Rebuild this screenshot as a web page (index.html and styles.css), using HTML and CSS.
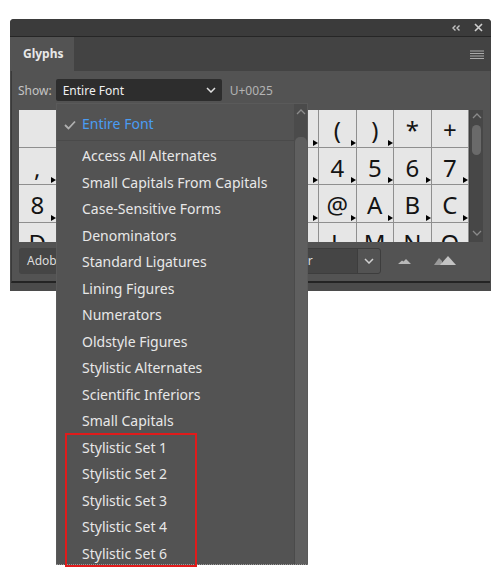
FILE: index.html
```html
<!DOCTYPE html>
<html>
<head>
	<title>Glyphs</title>
	<link rel="stylesheet" href="styles.css">
</head>
<body>
	<div class="panel">
		<div class="titlebar">
			<svg class="collapse" width="8" height="6" viewBox="0 0 8 6"><path d="M3.5 0.5 L1 3 L3.5 5.5 M7.5 0.5 L5 3 L7.5 5.5" fill="none" stroke="#c4c4c4" stroke-width="1.4"/></svg>
			<svg class="close" width="9" height="9" viewBox="0 0 9 9"><path d="M1 1 L8 8 M8 1 L1 8" stroke="#cfcfcf" stroke-width="1.6"/></svg>
		</div>
		<div class="tabs">
			<div class="tab">Glyphs</div>
			<svg class="tab-menu" width="14" height="9" viewBox="0 0 14 9"><path d="M0 1 H14 M0 3.5 H14 M0 6 H14 M0 8.5 H14" stroke="#a9a9a9" stroke-width="1.2"/></svg>
		</div>
		<div class="content">
			<div class="show-row">
				<span class="show-label">Show:</span>
				<div class="select">
					<span>Entire Font</span>
					<svg width="10" height="6" viewBox="0 0 10 6"><path d="M1 1 L5 5 L9 1" fill="none" stroke="#e0e0e0" stroke-width="1.5"/></svg>
				</div>
				<span class="code">U+0025</span>
			</div>

			<div class="grid-wrap">
				<div class="grid">
					<div class="cell"></div>
					<div class="cell alt">!</div>
					<div class="cell alt">"</div>
					<div class="cell alt">#</div>
					<div class="cell alt">$</div>
					<div class="cell alt">%</div>
					<div class="cell alt">&amp;</div>
					<div class="cell alt">'</div>
					<div class="cell alt">(</div>
					<div class="cell alt">)</div>
					<div class="cell">*</div>
					<div class="cell">+</div>

					<div class="cell alt">,</div>
					<div class="cell alt">-</div>
					<div class="cell alt">.</div>
					<div class="cell alt">/</div>
					<div class="cell alt">0</div>
					<div class="cell alt">1</div>
					<div class="cell alt">2</div>
					<div class="cell alt">3</div>
					<div class="cell alt">4</div>
					<div class="cell alt">5</div>
					<div class="cell alt">6</div>
					<div class="cell alt">7</div>

					<div class="cell alt">8</div>
					<div class="cell alt">9</div>
					<div class="cell alt">:</div>
					<div class="cell alt">;</div>
					<div class="cell alt">&lt;</div>
					<div class="cell alt">=</div>
					<div class="cell alt">&gt;</div>
					<div class="cell alt">?</div>
					<div class="cell alt">@</div>
					<div class="cell alt">A</div>
					<div class="cell alt">B</div>
					<div class="cell alt">C</div>

					<div class="cell alt">D</div>
					<div class="cell alt">E</div>
					<div class="cell alt">F</div>
					<div class="cell alt">G</div>
					<div class="cell alt">H</div>
					<div class="cell alt">I</div>
					<div class="cell alt">J</div>
					<div class="cell alt">K</div>
					<div class="cell alt">L</div>
					<div class="cell alt">M</div>
					<div class="cell alt">N</div>
					<div class="cell alt">O</div>
				</div>
				<div class="grid-scroll">
					<svg width="10" height="6" viewBox="0 0 10 6"><path d="M1 5 L5 1 L9 5" fill="none" stroke="#8a8a8a" stroke-width="1.3"/></svg>
					<div class="grid-thumb"></div>
					<svg class="down" width="10" height="6" viewBox="0 0 10 6"><path d="M1 1 L5 5 L9 1" fill="none" stroke="#8a8a8a" stroke-width="1.3"/></svg>
				</div>
			</div>

			<div class="font-row">
				<div class="font-family">Adobe Clean</div>
				<div class="font-style">
					<span class="style-name">Regular</span>
					<span class="style-arrow">
						<svg width="10" height="6" viewBox="0 0 10 6"><path d="M1 1 L5 5 L9 1" fill="none" stroke="#d0d0d0" stroke-width="1.5"/></svg>
					</span>
				</div>
				<svg class="size-small" width="13" height="5" viewBox="0 0 13 5"><polygon points="0,5 4,1.5 5.5,2.5 8,0 13,5" fill="#b9b9b9"/></svg>
				<svg class="size-large" width="22" height="10" viewBox="0 0 22 10"><polygon points="0,10 5,3 8,6 8,10" fill="#9a9a9a"/><polygon points="6,10 14,1 22,10" fill="#c4c4c4"/></svg>
			</div>
		</div>
	</div>

	<div class="dropdown">
		<div class="menu-list">
			<div class="item selected">
				<svg class="check" width="12" height="10" viewBox="0 0 12 10"><path d="M1 5 L4.5 8.5 L11 1.5" fill="none" stroke="#b0b0b0" stroke-width="1.8"/></svg>
				Entire Font
			</div>
			<div class="separator"></div>
			<div class="item">Access All Alternates</div>
			<div class="item">Small Capitals From Capitals</div>
			<div class="item">Case-Sensitive Forms</div>
			<div class="item">Denominators</div>
			<div class="item">Standard Ligatures</div>
			<div class="item">Lining Figures</div>
			<div class="item">Numerators</div>
			<div class="item">Oldstyle Figures</div>
			<div class="item">Stylistic Alternates</div>
			<div class="item">Scientific Inferiors</div>
			<div class="item">Small Capitals</div>
			<div class="item">Stylistic Set 1</div>
			<div class="item">Stylistic Set 2</div>
			<div class="item">Stylistic Set 3</div>
			<div class="item">Stylistic Set 4</div>
			<div class="item">Stylistic Set 6</div>
		</div>
		<div class="menu-scroll">
			<svg width="10" height="6" viewBox="0 0 10 6"><path d="M1 5 L5 1 L9 5" fill="none" stroke="#8c8c8c" stroke-width="1.3"/></svg>
			<div class="menu-thumb"></div>
		</div>
	</div>

	<div class="highlight"></div>
</body>
</html>
```

FILE: styles.css
```css
body {
	position: relative;
	box-sizing: border-box;
	min-height: 580px;
	margin: 0;
	padding: 19px 9px 0 10px;
	background-color: #fff;
	font-family: "Noto Sans", sans-serif;
	font-size: 12px;
}

.panel {
	width: 481px;
	background-color: #4b4b4b;
	border-radius: 4px 4px 0 0;
	overflow: hidden;
}

.titlebar {
	height: 17px;
	display: flex;
	align-items: center;
	justify-content: flex-end;
	gap: 14px;
	padding-right: 8px;
	background-color: #3b3b3b;
	border-bottom: 1px solid #262626;
}

.tabs {
	height: 34px;
	display: flex;
	align-items: center;
	justify-content: space-between;
	padding-right: 7px;
	background-color: #434343;
}

.tab {
	height: 34px;
	line-height: 34px;
	padding: 0 10px 0 13px;
	background-color: #535353;
	color: #e8e8e8;
	font-weight: bold;
}

.content {
	margin: 0 1px 8px 1px;
	padding: 8px 7px 7px 7px;
	background-color: #535353;
	border-left: 1px solid #3a3a3a;
	border-bottom: 2px solid #242424;
}

.show-row {
	height: 22px;
	display: flex;
	align-items: center;
	margin-left: -1px;
}

.show-label {
	color: #c4c4c4;
	margin-right: 4px;
}

.select {
	width: 166px;
	height: 22px;
	box-sizing: border-box;
	display: flex;
	align-items: center;
	justify-content: space-between;
	padding: 0 6px 0 7px;
	background-color: #2d2d2d;
	border-radius: 2px;
	color: #f0f0f0;
}

.code {
	margin-left: 8px;
	color: #b4b4b4;
}

.grid-wrap {
	display: flex;
	height: 132px;
	margin-top: 9px;
	overflow: hidden;
}

.grid {
	width: 450px;
	display: grid;
	grid-template-columns: repeat(12, 37.5px);
	grid-auto-rows: 37.7px;
	align-content: start;
}

.cell {
	position: relative;
	box-sizing: border-box;
	border-right: 1px solid #8f8f8f;
	border-bottom: 1px solid #8f8f8f;
	background-color: #e6e6e6;
	color: #141414;
	font-size: 24px;
	line-height: 36px;
	padding-top: 2px;
	text-align: center;
}

.cell.alt::after {
	content: "";
	position: absolute;
	right: 0;
	bottom: 1px;
	border-left: 5px solid #000;
	border-top: 3px solid transparent;
	border-bottom: 3px solid transparent;
}

.grid-scroll {
	width: 14px;
	display: flex;
	flex-direction: column;
	align-items: center;
	background-color: #474747;
	border-left: 1px solid #3f3f3f;
	padding-top: 3px;
}

.grid-thumb {
	width: 9px;
	height: 30px;
	margin-top: 6px;
	background-color: #6a6a6a;
	border-radius: 5px;
}

.grid-scroll .down {
	margin-top: auto;
	margin-bottom: 6px;
}

.font-row {
	height: 26px;
	display: flex;
	align-items: center;
	margin-top: 6px;
}

.font-family {
	width: 236px;
	height: 26px;
	line-height: 26px;
	box-sizing: border-box;
	padding-left: 8px;
	background-color: #454545;
	border-radius: 3px;
	color: #dcdcdc;
}

.font-style {
	display: flex;
	height: 26px;
	margin-left: 5px;
	box-sizing: border-box;
	border: 1px solid #3d3d3d;
	border-radius: 3px;
	overflow: hidden;
}

.style-name {
	width: 88px;
	padding-left: 8px;
	line-height: 24px;
	background-color: #454545;
	color: #dcdcdc;
	border-right: 1px solid #3d3d3d;
}

.style-arrow {
	width: 22px;
	display: flex;
	align-items: center;
	justify-content: center;
}

.size-small {
	margin-left: 17px;
}

.size-large {
	margin-left: 23px;
	margin-bottom: 2px;
}

.dropdown {
	position: absolute;
	left: 56px;
	top: 103px;
	width: 252px;
	height: 462px;
	display: flex;
	box-sizing: border-box;
	background-color: #535353;
	border: 1px solid #5a5a5a;
	border-bottom: 1px dotted #9a9a9a;
	overflow: hidden;
	font-size: 14px;
}

.menu-list {
	flex: 1;
	padding-top: 7px;
}

.item {
	position: relative;
	height: 26.5px;
	line-height: 26.5px;
	padding-left: 25px;
	color: #e8e8e8;
	white-space: nowrap;
}

.item.selected {
	color: #4a9cf2;
}

.check {
	position: absolute;
	left: 7px;
	top: 9px;
}

.separator {
	height: 1px;
	margin: 2px 0 2.5px;
	background-color: #4a4a4a;
}

.menu-scroll {
	width: 13px;
	display: flex;
	flex-direction: column;
	align-items: center;
	background-color: #4b4b4b;
	padding-top: 5px;
}

.menu-thumb {
	flex: 1;
	width: 12px;
	margin-top: 22px;
	background-color: #5f5f5f;
	border-radius: 5px 5px 0 0;
}

.highlight {
	position: absolute;
	left: 65px;
	top: 433px;
	width: 132px;
	height: 134px;
	box-sizing: border-box;
	border: 2px solid #e01b1b;
}
```
